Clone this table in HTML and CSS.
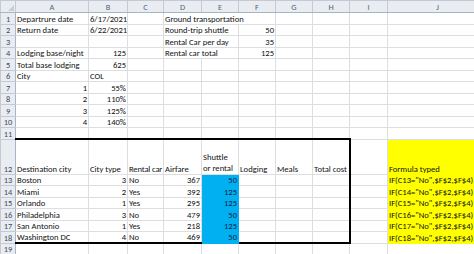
FILE: index.html
```html
<!DOCTYPE html>
<html>
<head>
<meta charset="utf-8">
<link rel="stylesheet" href="styles.css">
</head>
<body>
<table class="sheet">
  <colgroup>
    <col class="c-rn"><col class="c-a"><col class="c-b"><col class="c-c"><col class="c-d"><col class="c-e"><col class="c-f"><col class="c-g"><col class="c-h"><col class="c-i"><col class="c-j">
  </colgroup>
  <tr class="hdr">
    <th class="corner"><span class="tri"></span></th><th>A</th><th>B</th><th>C</th><th>D</th><th>E</th><th>F</th><th>G</th><th>H</th><th>I</th><th>J</th>
  </tr>
  <tr><th class="rn">1</th><td>Departrure date</td><td class="r">6/17/2021</td><td></td><td colspan="3">Ground transportation</td><td></td><td></td><td></td><td></td></tr>
  <tr><th class="rn">2</th><td>Return date</td><td class="r">6/22/2021</td><td></td><td colspan="2">Round-trip shuttle</td><td class="r">50</td><td></td><td></td><td></td><td></td></tr>
  <tr><th class="rn">3</th><td></td><td></td><td></td><td colspan="2">Rental Car per day</td><td class="r">35</td><td></td><td></td><td></td><td></td></tr>
  <tr><th class="rn">4</th><td>Lodging base/night</td><td class="r">125</td><td></td><td colspan="2">Rental car total</td><td class="r">125</td><td></td><td></td><td></td><td></td></tr>
  <tr><th class="rn">5</th><td>Total base lodging</td><td class="r">625</td><td></td><td></td><td></td><td></td><td></td><td></td><td></td><td></td></tr>
  <tr><th class="rn">6</th><td>City</td><td>COL</td><td></td><td></td><td></td><td></td><td></td><td></td><td></td><td></td></tr>
  <tr><th class="rn">7</th><td class="r">1</td><td class="r">55%</td><td></td><td></td><td></td><td></td><td></td><td></td><td></td><td></td></tr>
  <tr><th class="rn">8</th><td class="r">2</td><td class="r">110%</td><td></td><td></td><td></td><td></td><td></td><td></td><td></td><td></td></tr>
  <tr><th class="rn">9</th><td class="r">3</td><td class="r">125%</td><td></td><td></td><td></td><td></td><td></td><td></td><td></td><td></td></tr>
  <tr><th class="rn">10</th><td class="r">4</td><td class="r">140%</td><td></td><td></td><td></td><td></td><td></td><td></td><td></td><td></td></tr>
  <tr class="boxtop"><th class="rn">11</th><td></td><td></td><td></td><td></td><td></td><td></td><td></td><td></td><td></td><td></td></tr>
  <tr class="tall"><th class="rn">12</th><td>Destination city</td><td>City type</td><td class="tight">Rental car</td><td>Airfare</td><td class="wrap">Shuttle<br>or rental</td><td>Lodging</td><td>Meals</td><td class="boxr">Total cost</td><td></td><td class="yel">Formula typed</td></tr>
  <tr><th class="rn">13</th><td>Boston</td><td class="r">3</td><td>No</td><td class="r">367</td><td class="r blue">50</td><td></td><td></td><td class="boxr"></td><td></td><td class="yel">IF(C13="No",$F$2,$F$4)</td></tr>
  <tr><th class="rn">14</th><td>Miami</td><td class="r">2</td><td>Yes</td><td class="r">392</td><td class="r blue">125</td><td></td><td></td><td class="boxr"></td><td></td><td class="yel">IF(C14="No",$F$2,$F$4)</td></tr>
  <tr><th class="rn">15</th><td>Orlando</td><td class="r">1</td><td>Yes</td><td class="r">295</td><td class="r blue">125</td><td></td><td></td><td class="boxr"></td><td></td><td class="yel">IF(C15="No",$F$2,$F$4)</td></tr>
  <tr><th class="rn">16</th><td>Philadelphia</td><td class="r">3</td><td>No</td><td class="r">479</td><td class="r blue">50</td><td></td><td></td><td class="boxr"></td><td></td><td class="yel">IF(C16="No",$F$2,$F$4)</td></tr>
  <tr><th class="rn">17</th><td>San Antonio</td><td class="r">1</td><td>Yes</td><td class="r">218</td><td class="r blue">125</td><td></td><td></td><td class="boxr"></td><td></td><td class="yel">IF(C17="No",$F$2,$F$4)</td></tr>
  <tr class="boxbot"><th class="rn">18</th><td>Washington DC</td><td class="r">4</td><td>No</td><td class="r">469</td><td class="r blue">50</td><td></td><td></td><td class="boxr"></td><td></td><td class="yel">IF(C18="No",$F$2,$F$4)</td></tr>
  <tr><th class="rn">19</th><td></td><td></td><td></td><td></td><td></td><td></td><td></td><td></td><td></td><td></td></tr>
</table>
</body>
</html>
```

FILE: styles.css
```css
html, body {
  margin: 0;
  padding: 0;
  background: #ffffff;
  overflow: hidden;
}
body {
  width: 474px;
  height: 254px;
}
.sheet {
  border-collapse: collapse;
  table-layout: fixed;
  width: 487px;
  font-family: "Carlito", "Lato", "Liberation Sans", sans-serif;
  font-size: 8.6px;
  color: #111;
}
.c-rn { width: 15px; }
.c-a { width: 73px; }
.c-b { width: 39px; }
.c-c { width: 36px; }
.c-d { width: 38px; }
.c-e { width: 37px; }
.c-f { width: 37px; }
.c-g { width: 37px; }
.c-h { width: 37px; }
.c-i { width: 38px; }
.c-j { width: 100px; }

.sheet tr { height: 11.5px; }
.sheet tr.hdr { height: 12px; }
.sheet tr.tall { height: 35px; }

.sheet td {
  border: 1px solid #dcdee2;
  padding: 0 1px 0 1px;
  white-space: nowrap;
  overflow: visible;
  vertical-align: bottom;
  line-height: 10px;
}
.sheet td.r { text-align: right; }
.sheet td.wrap { white-space: normal; line-height: 11px; }
.sheet td.tight { letter-spacing: -0.15px; }

.sheet th {
  background: #e9edf2;
  color: #3d4a5a;
  font-weight: normal;
  border: 1px solid #c3cad4;
  padding: 0;
  line-height: 10px;
  font-size: 8.4px;
}
.hdr th {
  text-align: center;
  vertical-align: middle;
  border-bottom-color: #a9b5c4;
  color: #55657a;
}
.sheet th.rn {
  text-align: center;
  vertical-align: bottom;
  border-right-color: #a9b5c4;
}
.corner {
  position: relative;
}
.tri {
  position: absolute;
  right: 1px;
  bottom: 1px;
  width: 0;
  height: 0;
  border-left: 6px solid transparent;
  border-bottom: 6px solid #c4ccd6;
}

.boxtop td { border-bottom: 2px solid #000; }
.boxtop td:nth-last-child(-n+2) { border-bottom: 1px solid #dcdee2; }
.boxbot td { border-bottom: 2px solid #000; }
.boxbot td:nth-last-child(-n+2) { border-bottom: 1px solid #dcdee2; }
.sheet td.boxr { border-right: 2px solid #000; }

.sheet td.blue {
  background: #00b0f0;
  border-color: #00b0f0;
  color: #0b2448;
}
.sheet td.yel {
  background: #ffff00;
  border-color: #ffff00;
}
```
